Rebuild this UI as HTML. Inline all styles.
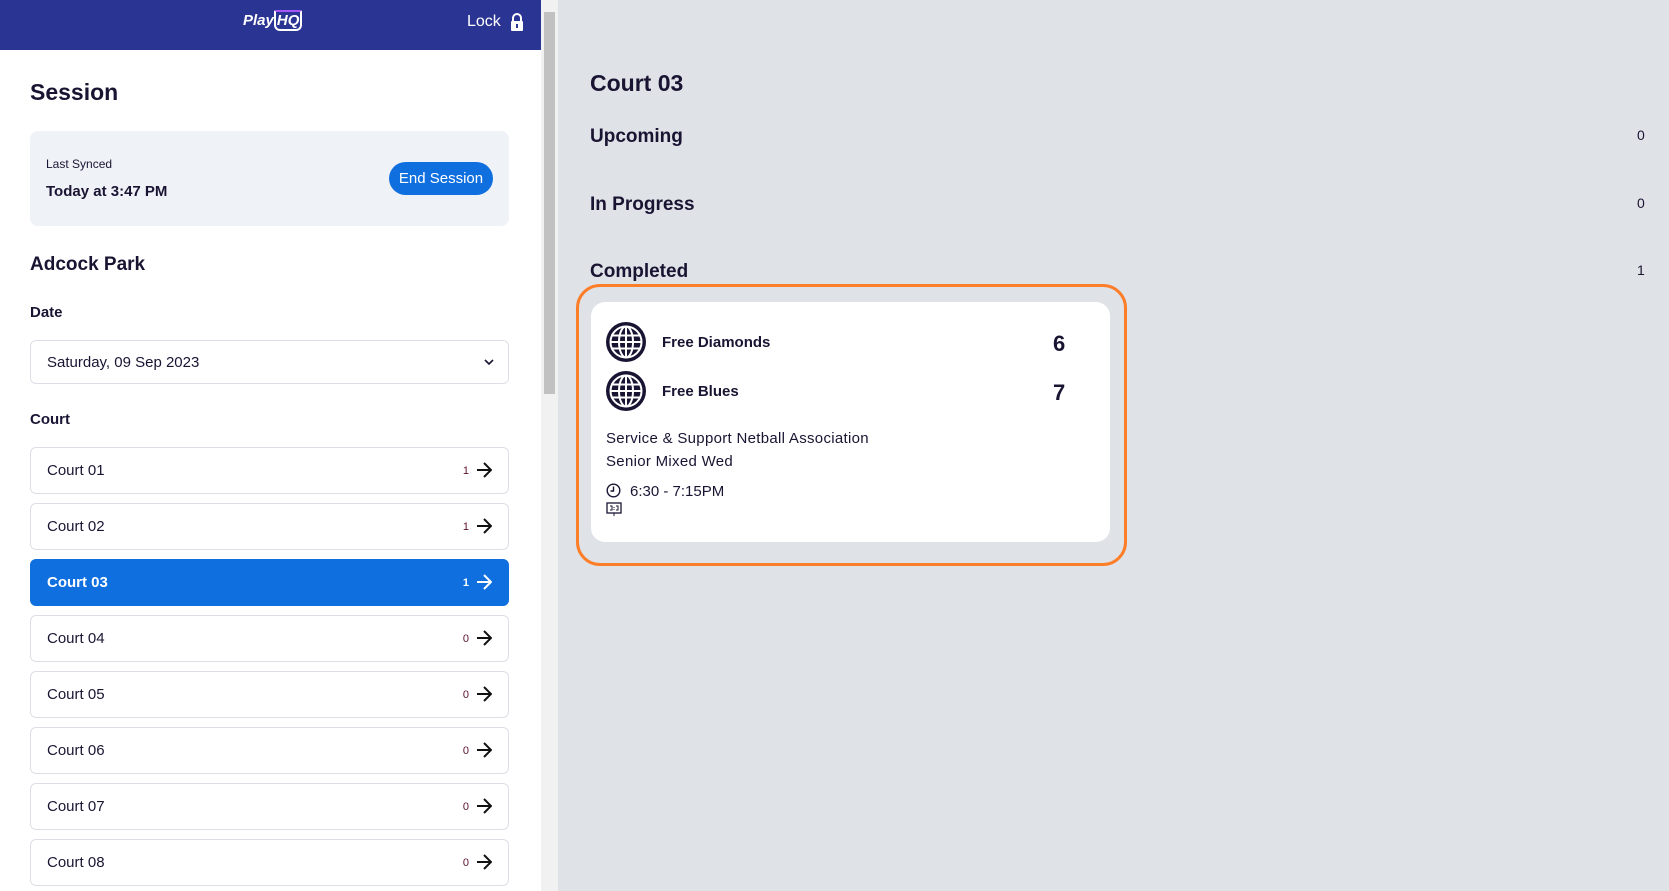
<!DOCTYPE html>
<html><head><style>
*{box-sizing:border-box;margin:0;padding:0}
body{width:1669px;height:891px;overflow:hidden;background:#dfe2e7;font-family:"Liberation Sans",sans-serif;color:#1a1433;position:relative}
.side{position:absolute;left:0;top:0;width:541px;height:891px;background:#fff}
.hdr{position:absolute;left:0;top:0;width:541px;height:50px;background:#2a3493}
.sb{position:absolute;left:541px;top:0;width:17px;height:891px;background:#f1f1f1}
.thumb{position:absolute;left:544px;top:12px;width:11px;height:382px;background:#c1c1c1}
.abs{position:absolute}
.row{position:absolute;left:30px;width:479px;height:47px;border:1px solid #dcdfe6;border-radius:6px;background:#fff;font-size:15px}
.row .n{position:absolute;left:16px;top:14px}
.row .c{position:absolute;right:39px;top:17px;font-size:11px;color:#5a1030}
.row svg{position:absolute;right:16px;top:14px}
.row.act{background:#0f6fde;border-color:#0f6fde;color:#fff;font-weight:bold}
.row.act .c{color:#fff}
.h{font-weight:bold}
</style></head><body>
<div class="side"></div>
<div class="hdr"></div>
<div class="abs" style="left:243px;top:12px;color:#fff;font-style:italic;font-weight:bold;font-size:15px">Play<span style="border:2px solid #fff;border-radius:2px 2px 6px 6px;padding:0 1px;border-top-color:#a855f7">HQ</span></div>
<div class="abs" style="left:467px;top:13px;color:#fff;font-size:16px">Lock</div>
<svg class="abs" style="left:510px;top:13px" width="14" height="18" viewBox="0 0 14 18"><path d="M3 8V5a4 4 0 0 1 8 0v3" fill="none" stroke="#fff" stroke-width="2"/><rect x="1" y="8" width="12" height="10" rx="1" fill="#fff"/><rect x="6" y="11" width="2" height="4" fill="#2a3493"/></svg>
<div class="sb"></div><div class="thumb"></div>
<div class="abs h" style="left:30px;top:79px;font-size:23px">Session</div>
<div class="abs" style="left:30px;top:131px;width:479px;height:95px;background:#eff2f7;border-radius:8px"></div>
<div class="abs" style="left:46px;top:157px;font-size:12px">Last Synced</div>
<div class="abs" style="left:46px;top:183px;font-size:15px;font-weight:bold">Today at 3:47 PM</div>
<div class="abs" style="left:389px;top:162px;width:104px;height:33px;background:#0f6fde;border-radius:17px;color:#fff;font-size:15px;text-align:center;line-height:33px">End Session</div>
<div class="abs h" style="left:30px;top:254px;font-size:19px">Adcock Park</div>
<div class="abs h" style="left:30px;top:304px;font-size:15px">Date</div>
<div class="abs" style="left:30px;top:340px;width:479px;height:44px;border:1px solid #dcdfe6;border-radius:6px;font-size:15px;padding:13px 0 0 16px">Saturday, 09 Sep 2023
<svg class="abs" style="right:14px;top:18px" width="10" height="7" viewBox="0 0 10 7"><path d="M1 1l4 4 4-4" fill="none" stroke="#1a1433" stroke-width="1.6"/></svg></div>
<div class="abs h" style="left:30px;top:411px;font-size:15px">Court</div>
<div class="row" style="top:447px"><span class="n">Court 01</span><span class="c">1</span><svg width="16" height="16" viewBox="0 0 16 16"><path d="M1 8h14M8 1l7 7-7 7" fill="none" stroke="#111" stroke-width="2"/></svg></div>
<div class="row" style="top:503px"><span class="n">Court 02</span><span class="c">1</span><svg width="16" height="16" viewBox="0 0 16 16"><path d="M1 8h14M8 1l7 7-7 7" fill="none" stroke="#111" stroke-width="2"/></svg></div>
<div class="row act" style="top:559px"><span class="n">Court 03</span><span class="c">1</span><svg width="16" height="16" viewBox="0 0 16 16"><path d="M1 8h14M8 1l7 7-7 7" fill="none" stroke="#fff" stroke-width="2"/></svg></div>
<div class="row" style="top:615px"><span class="n">Court 04</span><span class="c">0</span><svg width="16" height="16" viewBox="0 0 16 16"><path d="M1 8h14M8 1l7 7-7 7" fill="none" stroke="#111" stroke-width="2"/></svg></div>
<div class="row" style="top:671px"><span class="n">Court 05</span><span class="c">0</span><svg width="16" height="16" viewBox="0 0 16 16"><path d="M1 8h14M8 1l7 7-7 7" fill="none" stroke="#111" stroke-width="2"/></svg></div>
<div class="row" style="top:727px"><span class="n">Court 06</span><span class="c">0</span><svg width="16" height="16" viewBox="0 0 16 16"><path d="M1 8h14M8 1l7 7-7 7" fill="none" stroke="#111" stroke-width="2"/></svg></div>
<div class="row" style="top:783px"><span class="n">Court 07</span><span class="c">0</span><svg width="16" height="16" viewBox="0 0 16 16"><path d="M1 8h14M8 1l7 7-7 7" fill="none" stroke="#111" stroke-width="2"/></svg></div>
<div class="row" style="top:839px"><span class="n">Court 08</span><span class="c">0</span><svg width="16" height="16" viewBox="0 0 16 16"><path d="M1 8h14M8 1l7 7-7 7" fill="none" stroke="#111" stroke-width="2"/></svg></div>

<div class="abs h" style="left:590px;top:70px;font-size:23px">Court 03</div>
<div class="abs h" style="left:590px;top:126px;font-size:19px">Upcoming</div>
<div class="abs h" style="left:590px;top:194px;font-size:19px">In Progress</div>
<div class="abs h" style="left:590px;top:261px;font-size:19px">Completed</div>
<div class="abs" style="left:1637px;top:127px;font-size:14px">0</div>
<div class="abs" style="left:1637px;top:195px;font-size:14px">0</div>
<div class="abs" style="left:1637px;top:262px;font-size:14px">1</div>
<div class="abs" style="left:576px;top:284px;width:551px;height:282px;border:3px solid #fd7e28;border-radius:24px"></div>
<div class="abs" style="left:591px;top:302px;width:519px;height:240px;background:#fff;border-radius:14px"></div>
<svg class="abs" style="left:606px;top:322px" width="40" height="40" viewBox="0 0 40 40"><circle cx="20" cy="20" r="20" fill="#1a1433"/><g fill="none" stroke="#fff" stroke-width="2"><circle cx="20" cy="20" r="15.5"/><ellipse cx="20" cy="20" rx="7" ry="15.5"/><path d="M20 4.5v31M5 13.5h30M4.5 20h31M5 26.5h30"/></g></svg>
<svg class="abs" style="left:606px;top:371px" width="40" height="40" viewBox="0 0 40 40"><circle cx="20" cy="20" r="20" fill="#1a1433"/><g fill="none" stroke="#fff" stroke-width="2"><circle cx="20" cy="20" r="15.5"/><ellipse cx="20" cy="20" rx="7" ry="15.5"/><path d="M20 4.5v31M5 13.5h30M4.5 20h31M5 26.5h30"/></g></svg>
<div class="abs h" style="left:662px;top:334px;font-size:15px">Free Diamonds</div>
<div class="abs h" style="left:662px;top:383px;font-size:15px">Free Blues</div>
<div class="abs h" style="left:1053px;top:331px;font-size:22px">6</div>
<div class="abs h" style="left:1053px;top:380px;font-size:22px">7</div>
<div class="abs" style="left:606px;top:430px;font-size:15px;letter-spacing:0.3px">Service &amp; Support Netball Association</div>
<div class="abs" style="left:606px;top:453px;font-size:15px;letter-spacing:0.3px">Senior Mixed Wed</div>
<svg class="abs" style="left:606px;top:483px" width="15" height="15" viewBox="0 0 15 15"><circle cx="7.5" cy="7.5" r="6.3" fill="none" stroke="#1a1433" stroke-width="1.4"/><path d="M7.5 3.5v4.5H4.5" fill="none" stroke="#1a1433" stroke-width="1.4"/></svg>
<div class="abs" style="left:630px;top:483px;font-size:15px">6:30 - 7:15PM</div>
<svg class="abs" style="left:606px;top:502px" width="16" height="15" viewBox="0 0 16 15"><rect x="1" y="1" width="14" height="10" fill="none" stroke="#1a1433" stroke-width="1.3"/><path d="M4 4h2v4H4M10 4h2v4h-2M8 5v1M8 7v1M8 11v3" stroke="#1a1433" fill="none"/></svg>
</body></html>
